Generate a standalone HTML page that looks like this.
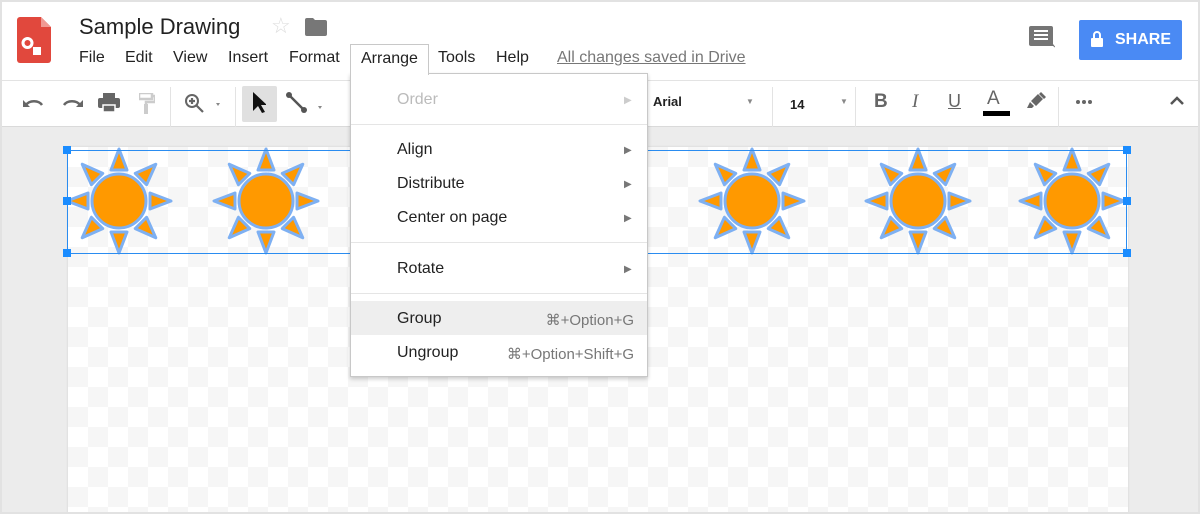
<!DOCTYPE html>
<html><head><style>
*{box-sizing:border-box;margin:0;padding:0}
body{width:1200px;height:514px;overflow:hidden;background:#fff;font-family:"Liberation Sans",Arial,sans-serif;position:relative}
.abs{position:absolute}
.frame{position:absolute;left:0;top:0;width:1200px;height:514px;border:2px solid #e2e2e2;pointer-events:none;z-index:50}
.menu span{position:absolute;top:49px;font-size:16px;color:#222}
.tb{position:absolute;top:80px;left:0;width:1200px;height:47px;border-top:1px solid #e3e3e3;border-bottom:1px solid #dadada;background:#fff}
.sep{position:absolute;top:6px;width:1px;height:40px;background:#e3e3e3}
.gray{position:absolute;top:127px;left:0;width:1200px;height:387px;background:#ececec}
.canvas{position:absolute;left:68px;top:147px;width:1060px;height:367px;background-color:#fff;
background-image:linear-gradient(45deg,#f6f6f6 25%,transparent 25%,transparent 75%,#f6f6f6 75%),linear-gradient(45deg,#f6f6f6 25%,transparent 25%,transparent 75%,#f6f6f6 75%);
background-size:40px 40px;background-position:0 0,20px 20px;box-shadow:0 0 2px #ccc}
.dd{position:absolute;left:350px;top:73px;width:298px;height:304px;background:#fff;border:1px solid #c8c8c8;box-shadow:0 2px 4px rgba(0,0,0,.2);z-index:10}
.dd .it{position:absolute;left:46px;font-size:16px;color:#222}
.dd .ar{position:absolute;left:273px;font-size:10px;color:#777}
.dd .hr{position:absolute;left:0;width:296px;height:1px;background:#e5e5e5}
.h{position:absolute;width:8px;height:8px;background:#1a8cff}
</style></head><body>
<div class="frame"></div>
<svg class="abs" style="left:17px;top:17px" width="34" height="46" viewBox="0 0 34 46"><path d="M3 0H24L34 10V43a3 3 0 0 1-3 3H3a3 3 0 0 1-3-3V3a3 3 0 0 1 3-3z" fill="#e1483d"/><path d="M24 0V10H34z" fill="#f09a93"/><circle cx="10.5" cy="26" r="4.5" fill="none" stroke="#fff" stroke-width="3"/><path d="M16 30H24V38H16z" fill="#fff"/></svg>
<div class="abs" style="left:79px;top:14px;font-size:22px;color:#222">Sample Drawing</div>
<div class="abs" style="left:271px;top:13px;font-size:22px;color:#ddd">☆</div>
<svg class="abs" style="left:305px;top:18px" width="22" height="18" viewBox="0 0 22 18"><path d="M0 2a2 2 0 0 1 2-2h6l2 2h10a2 2 0 0 1 2 2v12a2 2 0 0 1-2 2H2a2 2 0 0 1-2-2z" fill="#777"/></svg>
<div class="menu">
<span style="left:79px">File</span><span style="left:125px">Edit</span><span style="left:173px">View</span><span style="left:228px">Insert</span><span style="left:289px">Format</span>
<span style="left:438px">Tools</span><span style="left:496px">Help</span>
<span style="left:557px;color:#777;text-decoration:underline">All changes saved in Drive</span>
</div>
<div class="abs" style="left:350px;top:44px;width:79px;height:31px;border:1px solid #c8c8c8;border-bottom:none;background:#fff;z-index:11;font-size:16px;color:#222;padding:5px 0 0 10px">Arrange</div>
<svg class="abs" style="left:1029px;top:26px" width="26" height="26" viewBox="0 0 26 26"><path d="M2 0h20a2 2 0 0 1 2 2v16l4 5-4-3H2a2 2 0 0 1-2-2V2a2 2 0 0 1 2-2z" fill="#757575"/><path d="M5 5h14M5 9h14M5 13h14" stroke="#fff" stroke-width="2"/></svg>
<div class="abs" style="left:1079px;top:20px;width:103px;height:40px;background:#4a8af4;border-radius:2px;color:#fff;font-weight:bold;font-size:16px;padding:11px 0 0 36px">SHARE</div>
<svg class="abs" style="left:1091px;top:31px" width="12" height="16" viewBox="0 0 12 16"><path d="M3 7V4a3 3 0 0 1 6 0v3" fill="none" stroke="#fff" stroke-width="2"/><rect x="0" y="7" width="12" height="9" rx="1" fill="#fff"/></svg>
<div class="tb">
<div class="sep" style="left:170px"></div><div class="sep" style="left:235px"></div><div class="sep" style="left:772px"></div><div class="sep" style="left:855px"></div><div class="sep" style="left:1058px"></div>
<svg class="abs" style="left:22px;top:12px" width="24" height="20" viewBox="0 0 24 20"><path d="M4 12a9 7 0 0 1 16 0" fill="none" stroke="#666" stroke-width="2.5"/><path d="M1 7v7h7z" fill="#666"/></svg>
<svg class="abs" style="left:60px;top:12px" width="24" height="20" viewBox="0 0 24 20"><path d="M4 12a9 7 0 0 1 16 0" fill="none" stroke="#666" stroke-width="2.5"/><path d="M23 7v7h-7z" fill="#666"/></svg>
<svg class="abs" style="left:98px;top:12px" width="22" height="20" viewBox="0 0 22 20"><rect x="5" y="0" width="12" height="5" fill="#666"/><rect x="0" y="5" width="22" height="10" rx="2" fill="#666"/><rect x="5" y="12" width="12" height="7" fill="#666" stroke="#fff" stroke-width="1.5"/></svg>
<svg class="abs" style="left:139px;top:12px" width="16" height="22" viewBox="0 0 16 22"><path d="M0 0h13v6H0zM13 3h3v6H7v3" fill="none" stroke="#ccc" stroke-width="2.5"/><rect x="5" y="11" width="4" height="10" fill="#ccc"/></svg>
<svg class="abs" style="left:184px;top:12px" width="40" height="22" viewBox="0 0 40 22"><circle cx="8" cy="8" r="6" fill="none" stroke="#666" stroke-width="2"/><path d="M12 12l7 7M5 8h6M8 5v6" stroke="#666" stroke-width="2.2"/><path d="M32 10l4 0-2 3z" fill="#888"/></svg>
<div class="abs" style="left:242px;top:5px;width:35px;height:36px;background:#e0e0e0;border-radius:2px"></div>
<svg class="abs" style="left:252px;top:11px" width="14" height="22" viewBox="0 0 14 22"><path d="M1 0v19l5-5 4 7 3-1-4-7h6z" fill="#111"/></svg>
<svg class="abs" style="left:286px;top:11px" width="40" height="22" viewBox="0 0 40 22"><path d="M3 3l15 15" stroke="#555" stroke-width="2.5"/><circle cx="3" cy="3" r="3" fill="#555"/><circle cx="18" cy="18" r="3" fill="#555"/><path d="M32 14l4 0-2 3z" fill="#888"/></svg>
<div class="abs" style="left:653px;top:13px;font-size:13px;font-weight:bold;color:#222">Arial</div>
<div class="abs" style="left:746px;top:16px;font-size:8px;color:#888">▼</div>
<div class="abs" style="left:790px;top:16px;font-size:13px;font-weight:bold;color:#222">14</div>
<div class="abs" style="left:840px;top:16px;font-size:8px;color:#888">▼</div>
<div class="abs" style="left:874px;top:10px;font-size:19px;font-weight:bold;color:#666">B</div>
<div class="abs" style="left:912px;top:10px;font-size:19px;font-style:italic;color:#666;font-family:'Liberation Serif',serif">I</div>
<div class="abs" style="left:948px;top:10px;font-size:18px;color:#666;text-decoration:underline">U</div>
<div class="abs" style="left:987px;top:7px;font-size:19px;color:#666">A</div>
<div class="abs" style="left:983px;top:30px;width:27px;height:5px;background:#000"></div>
<svg class="abs" style="left:1027px;top:11px" width="20" height="18" viewBox="0 0 20 18"><path d="M11 2l5 5-7 7-5-5z M14 0l5 5-2 2-5-5z M3 10l4 4-2 2H0z" fill="#666"/></svg>
<svg class="abs" style="left:1075px;top:18px" width="18" height="6" viewBox="0 0 18 6"><circle cx="3" cy="3" r="2" fill="#666"/><circle cx="9" cy="3" r="2" fill="#666"/><circle cx="15" cy="3" r="2" fill="#666"/></svg>
<svg class="abs" style="left:1170px;top:15px" width="14" height="10" viewBox="0 0 14 10"><path d="M1 8l6-6 6 6" fill="none" stroke="#555" stroke-width="2.5"/></svg>
</div>
<div class="gray"></div>
<div class="canvas"></div>
<svg class="abs" style="left:0;top:0" width="1200" height="514">
<defs><g id="sun" fill="#ff9900" stroke="#7eb0f2" stroke-width="3" stroke-linejoin="round">
<g id="ray"><path d="M0-52L-8-31H8z"/></g>
<use href="#ray" transform="rotate(45)"/><use href="#ray" transform="rotate(90)"/><use href="#ray" transform="rotate(135)"/><use href="#ray" transform="rotate(180)"/><use href="#ray" transform="rotate(225)"/><use href="#ray" transform="rotate(270)"/><use href="#ray" transform="rotate(315)"/>
<circle r="27"/></g></defs>
<use href="#sun" x="119" y="201"/><use href="#sun" x="266" y="201"/><use href="#sun" x="752" y="201"/><use href="#sun" x="918" y="201"/><use href="#sun" x="1072" y="201"/>
<rect x="67.5" y="150.5" width="1059" height="103" fill="none" stroke="#2a8cf0" stroke-width="1"/>
</svg>
<div class="h" style="left:63px;top:146px"></div><div class="h" style="left:63px;top:197px"></div><div class="h" style="left:63px;top:249px"></div>
<div class="h" style="left:1123px;top:146px"></div><div class="h" style="left:1123px;top:197px"></div><div class="h" style="left:1123px;top:249px"></div>
<div class="dd">
<div class="it" style="top:17px;color:#bbb">Order</div><div class="ar" style="top:21px;color:#ccc">▶</div>
<div class="hr" style="top:50px"></div>
<div class="it" style="top:67px">Align</div><div class="ar" style="top:71px">▶</div>
<div class="it" style="top:101px">Distribute</div><div class="ar" style="top:105px">▶</div>
<div class="it" style="top:135px">Center on page</div><div class="ar" style="top:139px">▶</div>
<div class="hr" style="top:168px"></div>
<div class="it" style="top:186px">Rotate</div><div class="ar" style="top:190px">▶</div>
<div class="hr" style="top:219px"></div>
<div class="abs" style="left:0;top:227px;width:296px;height:34px;background:#eee"></div>
<div class="it" style="top:236px">Group</div><div class="abs" style="right:13px;top:237px;font-size:15px;color:#777">⌘+Option+G</div>
<div class="it" style="top:270px">Ungroup</div><div class="abs" style="right:13px;top:271px;font-size:15px;color:#777">⌘+Option+Shift+G</div>
</div>
</body></html>
